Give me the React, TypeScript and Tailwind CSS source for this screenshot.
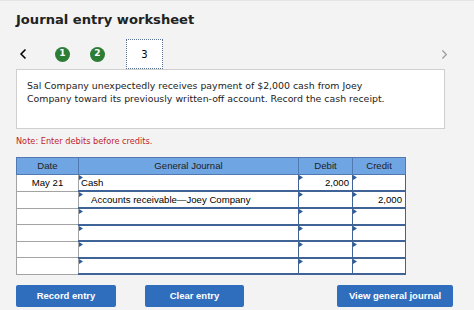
import { ChevronLeft, ChevronRight } from "lucide-react";

const rows = [
  { date: "May 21", account: "Cash", indent: false, debit: "2,000", credit: "" },
  { date: "", account: "Accounts receivable—Joey Company", indent: true, debit: "", credit: "2,000" },
  { date: "", account: "", indent: false, debit: "", credit: "" },
  { date: "", account: "", indent: false, debit: "", credit: "" },
  { date: "", account: "", indent: false, debit: "", credit: "" },
  { date: "", account: "", indent: false, debit: "", credit: "" },
];

function Marker() {
  return (
    <svg className="absolute left-0 top-0" width="4" height="5" viewBox="0 0 4 5">
      <path d="M0 0 L4 2.5 L0 5 Z" fill="#2d5d9f" />
    </svg>
  );
}

function InputCell({ value, align, pad }: { value: string; align: "left" | "right"; pad?: boolean }) {
  return (
    <td className="relative border-x-[1.5px] border-b-2 border-[#3f6396] bg-white p-0">
      <Marker />
      <div
        className={`${align === "right" ? "text-right pr-[3px]" : pad ? "pl-[12px]" : "pl-[2px]"} leading-[15px] text-[9.6px] text-black`}
      >
        {value}
      </div>
    </td>
  );
}

export default function App() {
  return (
    <div className="w-[474px] h-[310px] overflow-hidden bg-[#f3f3f3] border-t border-[#e4e4e4] font-['DejaVu_Sans',sans-serif]">
      <h1 className="pl-4 pt-[9px] text-[13.1px] font-bold leading-5 text-[#222]">Journal entry worksheet</h1>

      <div className="flex items-end h-[39px] pl-4 pr-[22px]">
        <div className="flex items-center h-[30px]">
          <ChevronLeft size={16} strokeWidth={2.5} className="text-black ml-[-1px]" />
          <span className="ml-[24px] flex h-[15px] w-[15px] items-center justify-center rounded-full bg-[#2e7d36] text-[9px] font-bold text-white">1</span>
          <span className="ml-[20px] flex h-[15px] w-[15px] items-center justify-center rounded-full bg-[#2e7d36] text-[9px] font-bold text-white">2</span>
        </div>
        <div className="ml-[21px] flex h-[30px] w-[37px] items-center justify-center border border-dotted border-[#5a6f96] bg-white text-[10px] text-black">
          3
        </div>
        <div className="ml-auto flex h-[30px] items-center">
          <ChevronRight size={15} strokeWidth={1.8} className="text-[#999]" />
        </div>
      </div>

      <div className="ml-4 w-[429px] h-[60px] border border-[#cfcfcf] bg-white px-[10px] pt-[9px] text-[9.4px] leading-[13px] text-[#222]">
        <p className="max-w-[362px]">
          Sal Company unexpectedly receives payment of $2,000 cash from Joey Company toward its previously written-off account. Record the cash receipt.
        </p>
      </div>

      <p className="pl-4 pt-[6px] text-[8.2px] leading-[12px] text-[#c0242c]">Note: Enter debits before credits.</p>

      <table className="ml-4 mt-[10px] w-[389px] border-collapse table-fixed font-['Liberation_Sans',sans-serif]">
        <colgroup>
          <col className="w-[62px]" />
          <col className="w-[220px]" />
          <col className="w-[54px]" />
          <col className="w-[53px]" />
        </colgroup>
        <thead>
          <tr className="h-[17px] bg-[#6fa5e2] text-[9.6px] text-[#222]">
            <th className="border border-[#4f79b0] font-normal">Date</th>
            <th className="border border-[#4f79b0] font-normal">General Journal</th>
            <th className="border border-[#4f79b0] font-normal">Debit</th>
            <th className="border border-[#4f79b0] font-normal">Credit</th>
          </tr>
        </thead>
        <tbody>
          {rows.map((r, i) => (
            <tr key={i} className="h-[16.6px]">
              <td className="border border-[#a3a3a3] bg-white p-0 text-center text-[9.6px] leading-[15px] text-black">{r.date}</td>
              <InputCell value={r.account} align="left" pad={r.indent} />
              <InputCell value={r.debit} align="right" />
              <InputCell value={r.credit} align="right" />
            </tr>
          ))}
        </tbody>
      </table>

      <div className="mt-[10px] flex pl-4 pr-[21px] whitespace-nowrap font-['Liberation_Sans',sans-serif] text-[9.5px] font-bold text-white">
        <button className="h-[22px] w-[100px] rounded-[2px] bg-[#2f6ebd]">Record entry</button>
        <button className="ml-[29px] h-[22px] w-[99px] rounded-[2px] bg-[#2f6ebd]">Clear entry</button>
        <button className="ml-auto h-[22px] w-[116px] rounded-[2px] bg-[#2f6ebd]">View general journal</button>
      </div>
    </div>
  );
}
